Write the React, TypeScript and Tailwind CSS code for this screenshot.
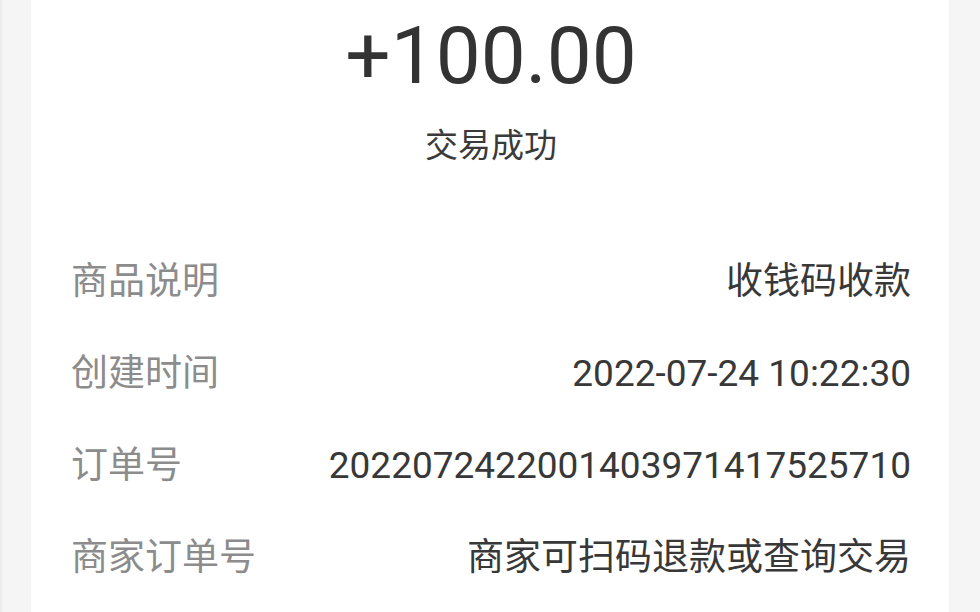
import React from 'react';

interface Row {
    label: string;
    value: string;
}

const rows: Row[] = [
    { label: '商品说明', value: '收钱码收款' },
    { label: '创建时间', value: '2022-07-24 10:22:30' },
    { label: '订单号', value: '2022072422001403971417525710' },
    { label: '商家订单号', value: '商家可扫码退款或查询交易' },
];

const App = () => {
    return (
        <div
            className="h-[612px] w-[980px] overflow-hidden bg-[#f5f5f5] flex"
            style={{ fontFamily: "Roboto, 'Noto Sans CJK SC', sans-serif" }}
        >
            <div className="w-[2px] bg-[#ebebeb]" />
            {/* Card */}
            <div className="ml-[29px] w-[918px] h-full bg-white pl-10 pr-[38px] flex flex-col">
                {/* Amount */}
                <div className="pt-[16px] flex flex-col items-center">
                    <p className="text-[80px] leading-none text-[#333333]">+100.00</p>
                    <p className="mt-[33px] text-[33px] leading-none text-[#3a3a3a]">交易成功</p>
                </div>

                {/* Details */}
                <div className="mt-[74px] flex flex-col">
                    {rows.map((row) => (
                        <div key={row.label} className="h-[92px] flex items-center justify-between">
                            <span className="text-[37px] text-[#8c8c8c]">{row.label}</span>
                            <span className="text-[37px] text-[#383838]">{row.value}</span>
                        </div>
                    ))}
                </div>
            </div>
        </div>
    );
};

export default App;
